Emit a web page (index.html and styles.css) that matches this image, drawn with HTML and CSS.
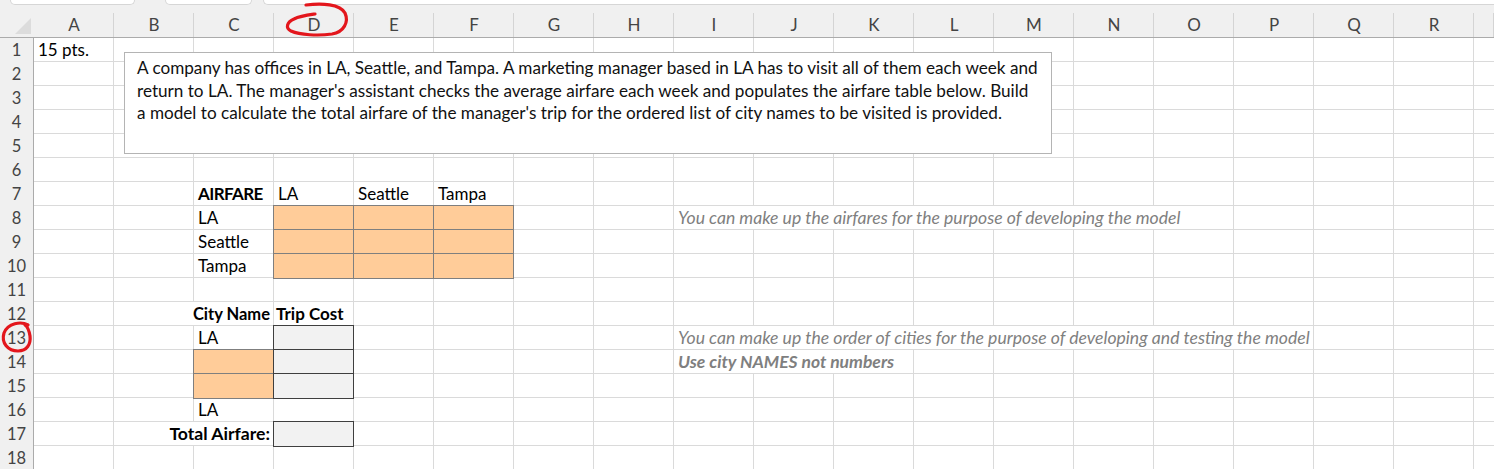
FILE: index.html
```html
<!DOCTYPE html>
<html lang="en">
<head>
<meta charset="utf-8">
<title>Airfare model</title>
<link rel="stylesheet" href="styles.css">
</head>
<body>
<div class="app">
  <div class="toolbar">
    <span class="tb tb1"></span><span class="tb tb2"></span><span class="tb tb3"></span>
  </div>
  <div class="sheet">
    <div class="colhead">
      <div class="ch corner"><span class="tri"></span></div>
      <div class="ch">A</div><div class="ch">B</div><div class="ch">C</div><div class="ch">D</div>
      <div class="ch">E</div><div class="ch">F</div><div class="ch">G</div><div class="ch">H</div>
      <div class="ch">I</div><div class="ch">J</div><div class="ch">K</div><div class="ch">L</div>
      <div class="ch">M</div><div class="ch">N</div><div class="ch">O</div><div class="ch">P</div>
      <div class="ch">Q</div><div class="ch">R</div><div class="ch"></div>
    </div>

    <div class="row"><div class="rh">1</div><div class="cell cA">15 pts.</div></div>
    <div class="row"><div class="rh">2</div></div>
    <div class="row"><div class="rh">3</div></div>
    <div class="row"><div class="rh">4</div></div>
    <div class="row"><div class="rh">5</div></div>
    <div class="row"><div class="rh">6</div></div>
    <div class="row">
      <div class="rh">7</div>
      <div class="cell cC bold caps">AIRFARE</div>
      <div class="cell cD">LA</div>
      <div class="cell cE">Seattle</div>
      <div class="cell cF">Tampa</div>
    </div>
    <div class="row">
      <div class="rh">8</div>
      <div class="cell cC">LA</div>
      <div class="cell cD box input"></div>
      <div class="cell cE box input"></div>
      <div class="cell cF box input"></div>
      <div class="cell cI s7 over note">You can make up the airfares for the purpose of developing the model</div>
    </div>
    <div class="row">
      <div class="rh">9</div>
      <div class="cell cC">Seattle</div>
      <div class="cell cD box input"></div>
      <div class="cell cE box input"></div>
      <div class="cell cF box input"></div>
    </div>
    <div class="row">
      <div class="rh">10</div>
      <div class="cell cC">Tampa</div>
      <div class="cell cD box input"></div>
      <div class="cell cE box input"></div>
      <div class="cell cF box input"></div>
    </div>
    <div class="row"><div class="rh">11</div></div>
    <div class="row">
      <div class="rh">12</div>
      <div class="cell cB s2 over bold right narrow">City Name</div>
      <div class="cell cD bold tight">Trip Cost</div>
    </div>
    <div class="row">
      <div class="rh">13</div>
      <div class="cell cC">LA</div>
      <div class="cell cD box calc"></div>
      <div class="cell cI s8 over note">You can make up the order of cities for the purpose of developing and testing the model</div>
    </div>
    <div class="row">
      <div class="rh">14</div>
      <div class="cell cC box input"></div>
      <div class="cell cD box calc"></div>
      <div class="cell cI s3 over note bold">Use city NAMES not numbers</div>
    </div>
    <div class="row">
      <div class="rh">15</div>
      <div class="cell cC box input"></div>
      <div class="cell cD box calc"></div>
    </div>
    <div class="row">
      <div class="rh">16</div>
      <div class="cell cC">LA</div>
    </div>
    <div class="row">
      <div class="rh">17</div>
      <div class="cell cB s2 over bold right wide">Total Airfare:</div>
      <div class="cell cD box calc"></div>
    </div>
    <div class="row"><div class="rh">18</div></div>
  </div>

  <div class="textbox">
    <p>A company has offices in LA, Seattle, and Tampa. A marketing manager based in LA has to visit all of them each week and<br>
    return to LA. The manager's assistant checks the average airfare each week and populates the airfare table below. Build<br>
    a model to calculate the total airfare of the manager's trip for the ordered list of city names to be visited is provided.</p>
  </div>

  <svg class="marks" width="1494" height="469" viewBox="0 0 1494 469" aria-hidden="true">
    <path d="M306,5 C322,3 340,4 345,13 C349,22 344,32 332,34 C318,36 300,35 291,31 C285,28 287,22 294,19 C300,16 308,15 315,14"/>
    <path d="M28,325 C21,321 8,323 4,333 C1,343 8,351 18,351 C27,351 31,344 30,336 C29,330 28,327 25,325"/>
  </svg>
</div>
</body>
</html>
```

FILE: styles.css
```css
:root {
  --grid: #dadada;
  --head: #f0f0f0;
  --headline: #ababab;
  --fs: 17px;
}

* { box-sizing: border-box; }

html, body {
  margin: 0;
  padding: 0;
  background: #fff;
}

body {
  font-family: Lato, "Open Sans", "Liberation Sans", sans-serif;
  font-size: var(--fs);
  color: #000;
  overflow: hidden;
}

.app {
  position: relative;
  width: 1494px;
  height: 469px;
  overflow: hidden;
}

/* top strip: bottoms of toolbar boxes */
.toolbar {
  display: flex;
  height: 5px;
  background: var(--head);
}
.tb {
  display: block;
  height: 5px;
  background: #fff;
  border: 1px solid #d6d6d6;
  border-top: 0;
  border-radius: 0 0 5px 5px;
}
.tb1 { margin-left: 10px; width: 125px; }
.tb2 { margin-left: 30px; width: 87px; }
.tb3 { margin-left: 11px; flex: 1; border-right: 0; border-radius: 0 0 0 5px; }

/* column header */
.colhead {
  display: grid;
  grid-template-columns: 34px repeat(18, 80px) 1fr;
  height: 33px;
  background: var(--head);
  border-bottom: 1px solid var(--headline);
}
.ch {
  position: relative;
  text-align: center;
  line-height: 24px;
  padding-top: 8px;
  color: #444;
  background: linear-gradient(#d4d4d4, #d4d4d4) right bottom / 1px 24px no-repeat;
}
.corner { background: none; }
.tri {
  position: absolute;
  right: 3px;
  bottom: 3px;
  width: 0;
  height: 0;
  border-style: solid;
  border-width: 0 0 16px 16px;
  border-color: transparent transparent #dcdcdc transparent;
}

/* rows */
.row {
  display: grid;
  grid-template-columns: 34px repeat(18, 80px) 1fr;
  height: 24px;
  line-height: 24px;
  background-image:
    linear-gradient(to right, transparent 79px, var(--grid) 79px),
    linear-gradient(to bottom, transparent 23px, var(--grid) 23px);
  background-size: 80px 24px, 100% 24px;
  background-position: 34px 0, 0 0;
  background-repeat: repeat-x, no-repeat;
}
.rh {
  grid-column: 1;
  background: var(--head);
  border-right: 1px solid var(--headline);
  border-bottom: 1px solid #dedede;
  text-align: center;
  color: #444;
  font-size: 16.5px;
}

.cell {
  grid-row: 1;
  padding: 0 3px 0 4px;
  white-space: nowrap;
}
.cA { grid-column-start: 2; }
.cB { grid-column-start: 3; }
.cC { grid-column-start: 4; }
.cD { grid-column-start: 5; }
.cE { grid-column-start: 6; }
.cF { grid-column-start: 7; }
.cI { grid-column-start: 10; }
.s2 { grid-column-end: span 2; }
.s3 { grid-column-end: span 3; }
.s7 { grid-column-end: span 7; }
.s8 { grid-column-end: span 8; }

.over {
  background: linear-gradient(#fff, #fff) 0 0 / calc(100% - 1px) 23px no-repeat;
}
.bold { font-weight: 700; }
.caps { letter-spacing: -0.6px; }
.right { text-align: right; padding-right: 4px; }
.wide { font-size: 17.6px; }
.narrow { font-size: 16.5px; }
.tight { padding-left: 2px; }
.note {
  font-style: italic;
  color: #7f7f7f;
  font-size: 17.6px;
}
.note.bold { font-size: 17.5px; }

/* styled cells: border sits on the gridlines */
.box {
  margin: -1px 0 0 -1px;
  border: 1px solid;
}
.input {
  background: #ffcc99;
  border-color: #7f7f7f;
}
.calc {
  background: #f2f2f2;
  border-color: #3f3f3f;
}

/* floating text box */
.textbox {
  position: absolute;
  left: 124px;
  top: 52px;
  width: 928px;
  height: 102px;
  background: #fff;
  border: 1px solid #b4b4b4;
  padding: 4px 0 0 12px;
}
.textbox p {
  margin: 0;
  font-size: 17.15px;
  line-height: 22.5px;
  white-space: nowrap;
  color: #111;
}

/* red pen annotations */
.marks {
  position: absolute;
  left: 0;
  top: 0;
  pointer-events: none;
}
.marks path {
  fill: none;
  stroke: #e3161c;
  stroke-width: 3.2;
  stroke-linecap: round;
  stroke-linejoin: round;
}
```
